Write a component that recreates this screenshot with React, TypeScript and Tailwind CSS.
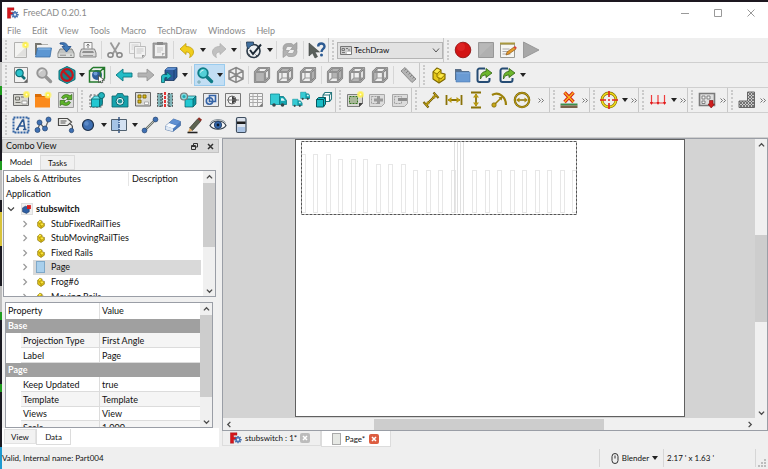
import { useState } from "react";
import type { ReactNode } from "react";
import clsx from "clsx";

interface IconProps {
  children: ReactNode;
  size?: string;
}

function Icon({ children, size = "size-[18px]" }: IconProps) {
  return (
    <svg viewBox="0 0 18 18" fill="none" className={clsx("shrink-0", size)} aria-hidden="true">
      {children}
    </svg>
  );
}

/* ---------- shared drawing parts ---------- */

function Spark({ x = 14, y = 4 }: { x?: number; y?: number }) {
  return (
    <g>
      <circle cx={x} cy={y} r="3.6" fill="#fdf46a" opacity="0.7" />
      <circle cx={x} cy={y} r="2.4" fill="#fff04a" />
      <circle cx={x} cy={y} r="1" fill="#fffde0" />
    </g>
  );
}

function GreyCube({ face }: { face: "front" | "top" | "right" | "rear" | "bottom" | "left" }) {
  const fill = "#b4b4b4";
  return (
    <Icon>
      {face === "rear" && <path d="M6 2h10v10H6z" fill={fill} />}
      {face === "bottom" && <path d="M2 16l4-4h10l-4 4z" fill={fill} />}
      {face === "left" && <path d="M2 6l4-4v10l-4 4z" fill={fill} />}
      <path d="M6 2v10h10M2 16l4-4" stroke="#9c9c9c" strokeWidth="1.200" />
      {face === "front" && <path d="M2 6h10v10H2z" fill={fill} />}
      {face === "top" && <path d="M2 6l4-4h10l-4 4z" fill={fill} />}
      {face === "right" && <path d="M12 6l4-4v10l-4 4z" fill={fill} />}
      <path d="M2 6h10v10H2zM2 6l4-4h10l-4 4M16 2v10l-4 4" stroke="#7f7f7f" strokeWidth="2.200" strokeLinejoin="round" />
      <path d="M2 6h10v10H2zM2 6l4-4h10l-4 4M16 2v10l-4 4" stroke="#a8a8a8" strokeWidth="0.900" strokeLinejoin="round" />
    </Icon>
  );
}

function Folder({ body, tab }: { body: string; tab: string }) {
  return (
    <Icon>
      <path d="M2 3h6l1 2h7v9H2z" fill={tab} />
      <path d="M3 6h14v10H3z" fill={body} stroke="#4a78ae" strokeWidth="0.600" />
      <path d="M3 7h14" stroke="#9cc0e6" strokeWidth="0.8" opacity="0.6" />
    </Icon>
  );
}

function PartIcon({ size }: { size?: string }) {
  return (
    <Icon size={size}>
      <path d="M3 6l4-4 4 2v3l4 1v5l-6 4-6-4z" fill="#e6c818" stroke="#7a6500" strokeWidth="1.1" strokeLinejoin="round" />
      <path d="M3 6l4 2 4-4M7 8v3l4 2 4-4.5M9 17v-5" stroke="#8a7300" strokeWidth="0.9" />
      <path d="M4 5.6l3-2.8 3 1.3-3 2.8zM8 10.600l3-2.600 3 1-3 2.700z" fill="#fbe94c" />
    </Icon>
  );
}

function FreeCadLogo({ size }: { size?: string }) {
  return (
    <Icon size={size}>
      <path d="M0.500 1h10v3.800H5.500v3h4.500v3.400H5.500V17h-5z" fill="#d4161c" stroke="#8e0b10" strokeWidth="0.5" />
      <g stroke="#3b66a5" strokeWidth="2.200">
        <path d="M12 6v11M6.500 11.500h11M8.100 7.600l7.800 7.800M15.900 7.600l-7.800 7.800" />
      </g>
      <circle cx="12" cy="11.500" r="3.600" fill="#4c78b8" />
      <circle cx="12" cy="11.500" r="1.600" fill="#eef2f8" />
    </Icon>
  );
}

function TealCube({ x = 0, y = 0 }: { x?: number; y?: number }) {
  return (
    <g transform={`translate(${x} ${y})`}>
      <path d="M1 4l3-3h8l-2 3v7l-1 1H1z" fill="#0f9ba5" />
      <path d="M1 4h8v8H1z" fill="#22c8d2" />
      <path d="M1 4l3-3h8L9 4z" fill="#6ee8ee" />
      <path d="M9 4l3-3v8l-3 3z" fill="#0d97a2" />
      <path d="M1 4h8v8H1zM1 4l3-3h8L9 4M12 1v8l-3 3" stroke="#07585f" strokeWidth="0.7" />
    </g>
  );
}

function Car({ x, y, s }: { x: number; y: number; s: number }) {
  return (
    <g transform={`translate(${x} ${y}) scale(${s})`}>
      <path d="M1 2h9v10.500H1z" fill="#35cbd4" stroke="#0b8a94" strokeWidth="0.8" />
      <path d="M10 4.500h4l3 4v4h-7z" fill="#14a5b0" stroke="#0b7780" strokeWidth="0.8" />
      <path d="M11.500 6.200h2l2 2.600h-4z" fill="#d6f7f9" />
      <circle cx="4.500" cy="13" r="1.800" fill="#37474c" />
      <circle cx="13" cy="13" r="1.800" fill="#37474c" />
    </g>
  );
}

function Magnifier({ glass, handle }: { glass: string; handle: string }) {
  return (
    <g>
      <path d="M10.500 10.500l5 5" stroke={handle} strokeWidth="3.400" strokeLinecap="round" />
      <circle cx="7" cy="7" r="4.800" fill={glass} stroke={handle} strokeWidth="1.800" />
      <path d="M4.500 6.500a3 3 0 0 1 3-2.400" stroke="#fff" strokeWidth="1" opacity="0.8" />
    </g>
  );
}

/* ---------- toolbar pieces ---------- */

function Tool({ label, children }: { label: string; children: ReactNode }) {
  return (
    <button type="button" aria-label={label} title={label} className="flex h-[22px] min-w-0 flex-1 items-center justify-center">
      {children}
    </button>
  );
}

function Group({ className, children }: { className: string; children: ReactNode }) {
  return <div className={clsx("flex shrink-0 items-center", className)}>{children}</div>;
}

function Drop({ label = "More", className = "w-[9px]" }: { label?: string; className?: string }) {
  return (
    <button type="button" aria-label={label} className={clsx("flex h-[22px] shrink-0 items-center justify-center", className)}>
      <svg viewBox="0 0 6 4" className="h-[4px] w-[6px]" aria-hidden="true">
        <path d="M0 0h6L3 4z" fill="#222" />
      </svg>
    </button>
  );
}

function Sep() {
  return (
    <span className="flex w-[5px] shrink-0 justify-center">
      <span className="h-[18px] w-px bg-[#d6d6d6]" />
    </span>
  );
}

function Grip() {
  return <span className="mx-[3px] h-[20px] w-0 shrink-0 border-l-2 border-dotted border-[#cacaca]" />;
}

function More({ className = "w-[9px]" }: { className?: string }) {
  return (
    <button type="button" aria-label="Show more tools" className={clsx("flex h-[22px] shrink-0 items-center justify-center", className)}>
      <svg viewBox="0 0 6 5" fill="none" className="h-[5px] w-[6px]" aria-hidden="true">
        <path d="M0.500 0.500l2 2-2 2M3.500 0.500l2 2-2 2" stroke="#555" strokeWidth="0.800" />
      </svg>
    </button>
  );
}

function Toolbar({ label, edge = true, children }: { label: string; edge?: boolean; children: ReactNode }) {
  return (
    <div role="toolbar" aria-label={label} className={clsx("flex h-full shrink-0 items-center", edge && "border-r border-[#c8c8c8]")}>
      <Grip />
      {children}
    </div>
  );
}

function ToolbarRow({ children }: { children: ReactNode }) {
  return <div className="flex h-[25px] shrink-0 overflow-hidden border-b border-[#cfcfcf] bg-[#efefef]">{children}</div>;
}

/* ---------- toolbars ---------- */

function FileRow() {
  const [workbench, setWorkbench] = useState("TechDraw");
  return (
    <ToolbarRow>
      <Toolbar label="File">
        <Group className="w-[89px]">
          <Tool label="New">
            <Icon>
              <path d="M2.500 1.500h12v15h-12z" fill="#f4f4f2" stroke="#b2b2b0" />
              <path d="M4 15.500h10V6z" fill="#e0e0de" />
              <Spark x={13.500} y={4} />
            </Icon>
          </Tool>
          <Tool label="Open">
            <Icon>
              <path d="M1 2h6l1 1.500h6V14H1z" fill="#77766f" />
              <path d="M3 4h11v6H3z" fill="#f2f2f2" />
              <path d="M3.500 7h14l-1.500 9H1.500z" fill="#5b96d2" stroke="#3a6ea6" strokeWidth="0.8" />
              <path d="M4 8h12.500" stroke="#93bfe8" />
            </Icon>
          </Tool>
          <Tool label="Save">
            <Icon>
              <path d="M3 8h12l2 4v4.500H1V12z" fill="#c2c4c2" stroke="#767876" strokeWidth="0.9" />
              <path d="M1.500 12.500h15v3.500h-15z" fill="#dcdedc" />
              <path d="M3 14.200h6M13 14.200h2" stroke="#888" />
              <path d="M3 2c4-1 7 0 8 3.500h3L9.500 11 5 5.500h2.500C7 4 5 3 3 3z" fill="#3f79b8" stroke="#204a87" strokeWidth="0.8" />
            </Icon>
          </Tool>
          <Tool label="Print">
            <Icon>
              <path d="M5 1.500h8V9H5z" fill="#f8f8f8" stroke="#8b8b8b" />
              <path d="M9 3v4M7.500 4.500L9 3l1.500 1.500" stroke="#777" />
              <path d="M2.500 8h13l1.500 4v4H1v-4z" fill="#dadada" stroke="#858585" />
              <path d="M4 10h10l1 2H3z" fill="#8f8f8f" />
              <path d="M4 14.500h10" stroke="#999" />
            </Icon>
          </Tool>
        </Group>
        <Sep />
        <Group className="w-[67px]">
          <Tool label="Cut">
            <Icon>
              <path d="M4.500 1.500l6.500 11M13.500 1.500L7 12.500" stroke="#999" strokeWidth="1.800" />
              <ellipse cx="4.500" cy="14" rx="2.600" ry="2.300" stroke="#858585" strokeWidth="1.500" />
              <ellipse cx="13.500" cy="14" rx="2.600" ry="2.300" stroke="#858585" strokeWidth="1.500" />
            </Icon>
          </Tool>
          <Tool label="Copy">
            <Icon>
              <path d="M1.500 1.500h11v11h-11z" fill="#f0f0f0" stroke="#c6c6c6" />
              <path d="M3.500 4h7M3.500 6h2M3.500 8h2" stroke="#d0d0d0" />
              <path d="M6.500 5.500h11v9l-2.500 2.500H6.500z" fill="#f2f2f2" stroke="#bcbcbc" />
              <path d="M8.500 8h7M8.500 10h7M8.500 12h5" stroke="#c8c8c8" />
              <path d="M17 14l-3 3v-3z" fill="#999" />
            </Icon>
          </Tool>
          <Tool label="Paste">
            <Icon>
              <path d="M2 2h14v15H2z" fill="#a4a4a4" stroke="#878787" strokeWidth="0.8" />
              <path d="M4 4h10v11H4z" fill="#f0f0f0" />
              <path d="M6 1h6v3H6z" fill="#888" />
              <path d="M6 7h6M6 9h6M6 11h4" stroke="#c4c4c4" />
              <path d="M14 12l-3 3v-3z" fill="#b0b0b0" />
            </Icon>
          </Tool>
        </Group>
        <Sep />
        <Group className="w-[22px]">
          <Tool label="Undo">
            <Icon>
              <path d="M2 8l6-5.500v3c5 0 7.500 2.500 7.500 5.500 0 2.500-1.500 4.500-4 5.500 1.500-3 0-5.500-3.500-5.500v2.500z" fill="#f0cd1c" stroke="#bf9c08" strokeWidth="0.8" />
            </Icon>
          </Tool>
        </Group>
        <Drop label="Undo history" className="w-[10px]" />
        <Group className="w-[22px]">
          <Tool label="Redo">
            <Icon>
              <path d="M16 8l-6-5.500v3C5 5.500 2.500 8 2.500 11c0 2.500 1.500 4.500 4 5.500C5 13.500 6.500 11 10 11v2.500z" fill="#c0c0c0" stroke="#b0b0b0" strokeWidth="0.8" />
            </Icon>
          </Tool>
        </Group>
        <Drop label="Redo history" className="w-[8px]" />
        <Sep />
        <Group className="w-[22px]">
          <Tool label="Validate">
            <Icon>
              <circle cx="8.500" cy="10" r="6.500" fill="#eceff2" stroke="#2c3a48" strokeWidth="1.600" />
              <path d="M1.500 1h7v3c-2 0-4 1.500-5 4-1.500-1-2-3-2-7z" fill="#3f6f9f" stroke="#24394e" strokeWidth="0.800" />
              <path d="M5 9l3 4 8-9.500" stroke="#1d2a36" strokeWidth="2" />
              <path d="M3 13l2 1M12 15l-1.500-1.500" stroke="#555" />
            </Icon>
          </Tool>
        </Group>
        <Drop />
        <Sep />
        <Group className="w-[22px]">
          <Tool label="Refresh">
            <Icon>
              <path d="M2 8.500V7a5 5 0 0 1 5-4.500h3.500L12.500 4 16 1.500v7H9.500l2-2L10 5.500H7.500C5.500 5.500 5 7 5 8.500z" fill="#aaa" stroke="#929292" strokeWidth="0.6" />
              <path d="M16 9.500V11a5 5 0 0 1-5 4.500H7.500L5.500 14 2 16.500v-7h6.500l-2 2L8 12.500h2.500c2 0 2.500-1.500 2.500-3z" fill="#b2b2b2" stroke="#929292" strokeWidth="0.6" />
            </Icon>
          </Tool>
        </Group>
        <Sep />
        <Group className="w-[22px]">
          <Tool label="What's This?">
            <Icon>
              <path d="M1 2v13l3.500-3 2.500 5 2.500-1.300L7 11h4.500z" fill="#5a605c" stroke="#3d423f" strokeWidth="0.6" />
              <path d="M10.200 5.500c0-4 6.300-4 6.300 0 0 2.500-3 2.500-3 5.500" stroke="#2c5a92" strokeWidth="2.400" />
              <circle cx="13.500" cy="14" r="1.500" fill="#2c5a92" />
            </Icon>
          </Tool>
        </Group>
      </Toolbar>
      <Toolbar label="Workbench">
        <div className="relative w-[106px]">
          <label htmlFor="workbench" className="sr-only">Workbench</label>
          <select
            id="workbench"
            value={workbench}
            onChange={(e) => setWorkbench(e.target.value)}
            className="block h-[17px] w-full appearance-none border border-[#b4b4b4] bg-[#e2e2e2] pl-[16px] text-[8px] leading-[15px] text-[#111]"
          >
            <option>TechDraw</option>
            <option>Part Design</option>
            <option>Sketcher</option>
          </select>
          <svg viewBox="0 0 12 9" fill="none" className="pointer-events-none absolute top-[4px] left-[3px] h-[9px] w-[12px]" aria-hidden="true">
            <path d="M0.500 0.500h11v8H0.500z" fill="#ccc" stroke="#777" />
            <path d="M2 2.500h2.500v2H2zM6 2.500h2M2 6.500h3M9 3v2" stroke="#777" />
            <path d="M7 6h4v2H7z" fill="#fff" />
          </svg>
          <svg viewBox="0 0 8 5" fill="none" className="pointer-events-none absolute top-[6px] right-[3px] h-[5px] w-[8px]" aria-hidden="true">
            <path d="M1 0.500l3 3.500 3-3.500" stroke="#555" />
          </svg>
        </div>
      </Toolbar>
      <Toolbar label="Macro" edge={false}>
        <Group className="w-[90px]">
          <Tool label="Record macro">
            <Icon>
              <circle cx="9" cy="9" r="7.800" fill="#d21414" stroke="#8a0a0a" strokeWidth="0.8" />
              <circle cx="7" cy="6" r="4" fill="#ee3a3a" opacity="0.4" />
            </Icon>
          </Tool>
          <Tool label="Stop macro">
            <Icon>
              <path d="M1.500 1.500h15v15h-15z" fill="#b0b0b0" stroke="#979797" />
              <path d="M2.500 2.500h13L2.500 15z" fill="#b8b8b8" />
            </Icon>
          </Tool>
          <Tool label="Macros">
            <Icon>
              <path d="M1.500 3h14v13.500h-14z" fill="#f6f6f2" stroke="#9a9a94" />
              <path d="M1 1.500h15v2H1z" fill="#a8983e" />
              <path d="M3.500 8h7M3.500 10.500h6M3.500 13h8" stroke="#aaa" />
              <path d="M7 14l1-3 7-5 2 2-7 5z" fill="#e2992c" stroke="#825014" strokeWidth="0.6" />
              <path d="M14.500 6.200L16 5l2 2-1.500 1z" fill="#d8433a" />
            </Icon>
          </Tool>
          <Tool label="Execute macro">
            <Icon>
              <path d="M1.500 1l15.500 8-15.500 8z" fill="#a8a8a8" stroke="#8e8e8e" strokeWidth="0.8" />
            </Icon>
          </Tool>
        </Group>
      </Toolbar>
    </ToolbarRow>
  );
}

function LinkIcon() {
  return (
    <Icon>
      <path d="M10 2.500H4.500a2 2 0 0 0-2 2v9.500a2 2 0 0 0 2 2h8a2 2 0 0 0 2-2v-2" stroke="#264c74" strokeWidth="2" />
      <path d="M5.500 13c-.5-5 2-7.500 5.500-7.500V2.500l6 4.500-6 4.500V9c-2.500 0-4.500 1-5.500 4z" fill="#6cb52c" stroke="#2e6010" strokeWidth="0.8" />
    </Icon>
  );
}

function ViewRow() {
  return (
    <ToolbarRow>
      <Toolbar label="View">
        <Group className="w-[68px]">
          <Tool label="Fit all">
            <Icon>
              <path d="M2.500 1.500h13v15h-13z" fill="#f2f2f2" stroke="#888" />
              <path d="M15 13l-3.500 3.500H15z" fill="#666" />
              <path d="M9 9l4 4" stroke="#0e6d75" strokeWidth="2.600" />
              <circle cx="7.500" cy="7" r="3.700" fill="#2bc3cc" stroke="#0e6d75" strokeWidth="1.200" />
            </Icon>
          </Tool>
          <Tool label="Fit selection">
            <Icon>
              <Magnifier glass="#c8c8c8" handle="#969696" />
            </Icon>
          </Tool>
          <Tool label="Draw style">
            <Icon>
              <path d="M9 0.500l8 4v9l-8 4-8-4v-9z" fill="#17aab4" stroke="#0b6b73" />
              <circle cx="9" cy="9" r="5.800" fill="#1a7f86" stroke="#c4161c" strokeWidth="2.200" />
              <path d="M5 5l8 8" stroke="#c4161c" strokeWidth="2.200" />
            </Icon>
          </Tool>
        </Group>
        <Drop className="w-[8px]" />
        <Group className="w-[22px]">
          <Tool label="Bounding box">
            <Icon>
              <circle cx="9" cy="9" r="5" fill="#2f5e9e" />
              <circle cx="7.500" cy="7.500" r="2" fill="#6e9bd6" />
              <path d="M1.500 5h11v11h-11zM5 1.500h11.500v11M1.500 5L5 1.500M12.500 5l4-3.500M12.500 16l4-3.500" stroke="#247a2c" strokeWidth="1.500" />
              <path d="M10.500 9.500v7l2-1.500 1 2 1.500-.8-1-2h2.500z" fill="#fff" stroke="#333" strokeWidth="0.7" />
            </Icon>
          </Tool>
        </Group>
        <Sep />
        <Group className="w-[67px]">
          <Tool label="Back">
            <Icon>
              <path d="M1 9l7-6v4h9v4H8v4z" fill="#25bcc6" stroke="#0b7780" strokeWidth="0.9" strokeLinejoin="round" />
            </Icon>
          </Tool>
          <Tool label="Forward">
            <Icon>
              <path d="M17 9l-7-6v4H1v4h9v4z" fill="#b3b3b3" stroke="#969696" strokeWidth="0.9" strokeLinejoin="round" />
            </Icon>
          </Tool>
          <Tool label="Go to linked object">
            <Icon>
              <path d="M5 4l3-2.500h9V11l-3 3.500H5z" fill="#2d5c9c" stroke="#16335c" strokeWidth="0.8" />
              <path d="M5 4l3-2.500h9L14 4z" fill="#5e8fd0" />
              <path d="M14 4v10.500" stroke="#16335c" strokeWidth="0.7" />
              <path d="M1.500 16.500V11c0-1.500 1-2.500 2.500-2.500h3V6l4.500 4L7 14v-2.500H5.500c-1 0-1 .5-1 1v4z" fill="#25bcc6" stroke="#0b5f66" strokeWidth="0.8" />
            </Icon>
          </Tool>
        </Group>
        <Drop />
        <Sep />
        <div className="flex h-[22px] shrink-0 items-center border border-[#99cbee] bg-[#c2def4]">
          <Group className="w-[20px]">
            <Tool label="Zoom">
              <Icon>
                <Magnifier glass="#54d0d7" handle="#0f7d86" />
                <path d="M1 16h4M3 14v4" stroke="#78a9b0" />
              </Icon>
            </Tool>
          </Group>
          <Drop />
        </div>
        <Group className="w-[21px]">
          <Tool label="Isometric">
            <Icon>
              <path d="M9 1.500l7 3.500v8l-7 3.500L2 13V5zM9 1.500V9M2 5l7 4 7-4M9 9v7.500M2 13l7-4 7 4" stroke="#888" strokeWidth="1.500" />
            </Icon>
          </Tool>
        </Group>
        <Sep />
        <Group className="w-[68px]">
          <Tool label="Front"><GreyCube face="front" /></Tool>
          <Tool label="Top"><GreyCube face="top" /></Tool>
          <Tool label="Right"><GreyCube face="right" /></Tool>
        </Group>
        <Sep />
        <Group className="w-[67px]">
          <Tool label="Rear"><GreyCube face="rear" /></Tool>
          <Tool label="Bottom"><GreyCube face="bottom" /></Tool>
          <Tool label="Left"><GreyCube face="left" /></Tool>
        </Group>
        <Sep />
        <Group className="w-[23px]">
          <Tool label="Measure">
            <Icon>
              <path d="M2 5l4-3.500 11 11.500-4 3.500z" fill="#b4b4b4" stroke="#8c8c8c" />
              <path d="M7 3l-1.500 1.500M9 5L7 7M11 7L9.500 8.500M13 9l-2 2M15 11l-1.500 1.500" stroke="#777" strokeWidth="0.8" />
            </Icon>
          </Tool>
        </Group>
      </Toolbar>
      <Toolbar label="Structure" edge={false}>
        <Group className="w-[90px]">
          <Tool label="Create part"><PartIcon /></Tool>
          <Tool label="Create group"><Folder body="#6a9bd4" tab="#5a6f88" /></Tool>
          <Tool label="Make link"><LinkIcon /></Tool>
          <Tool label="Make sub-link"><LinkIcon /></Tool>
        </Group>
        <Drop />
      </Toolbar>
    </ToolbarRow>
  );
}

function PagesRow() {
  return (
    <ToolbarRow>
      <Toolbar label="TechDraw pages">
        <Group className="w-[67px]">
          <Tool label="Insert default page">
            <Icon>
              <path d="M1.500 3.500h15v11h-15z" fill="#d6d6d0" stroke="#6b6b6b" />
              <path d="M3.500 6h4v3h-4zM9 6h3M3.500 11.500h5" stroke="#70706a" />
              <path d="M10 10h5v3h-5z" fill="#fff" stroke="#777" strokeWidth="0.6" />
              <Spark x={14.500} y={3.500} />
            </Icon>
          </Tool>
          <Tool label="Insert page from template">
            <Icon>
              <path d="M1 3h6l1 2h8v9H1z" fill="#d96c06" />
              <path d="M1 6h15v10.500H1z" fill="#fb8a1c" />
              <Spark x={14} y={4} />
            </Icon>
          </Tool>
          <Tool label="Redraw page">
            <Icon>
              <path d="M1.500 1.500h15v15h-15z" fill="#dcdcdc" stroke="#9c9c9c" />
              <path d="M4.500 6.500C6 3.500 10 2.500 13 5l1.800-1.500V8.500H9.500l1.700-1.700C9.500 5.800 7.500 6 6.500 8z" fill="#5fb52a" stroke="#2c6a10" strokeWidth="0.700" />
              <path d="M13.500 11.500c-1.500 3-5.500 4-8.500 1.500l-1.800 1.500V9.500h5.300l-1.700 1.700c1.700 1 3.700.8 4.700-1.200z" fill="#5fb52a" stroke="#2c6a10" strokeWidth="0.700" />
            </Icon>
          </Tool>
        </Group>
      </Toolbar>
      <Toolbar label="TechDraw views">
        <Group className="w-[249px]">
          <Tool label="Insert view">
            <Icon>
              <path d="M2 4h12v12H2z" stroke="#5b5b5b" strokeDasharray="2 1.500" />
              <TealCube x={2.500} y={4} />
              <circle cx="13.500" cy="4.500" r="3" fill="#22b5bf" stroke="#0a656c" />
            </Icon>
          </Tool>
          <Tool label="Insert active view">
            <Icon>
              <path d="M1 5h4l1.500-2.500h5L13 5h4v11H1z" fill="#16a3ad" stroke="#0b636a" strokeWidth="0.8" />
              <circle cx="9" cy="10.300" r="4" fill="#e4f6f7" stroke="#0b636a" />
              <circle cx="9" cy="10.300" r="2.300" fill="#1a8f98" />
            </Icon>
          </Tool>
          <Tool label="Insert projection group">
            <Icon>
              <path d="M1.500 1.500h15v13.500h-15z" fill="#dadad6" stroke="#666" />
              <path d="M4 4h3v3H4zM9 4h3v3H9zM4 9h3v3H4z" fill="#e2be1a" stroke="#7d6806" strokeWidth="0.9" />
              <path d="M10.500 11h4v2.500h-4z" fill="#fff" stroke="#888" strokeWidth="0.6" />
            </Icon>
          </Tool>
          <Tool label="Insert section view">
            <Icon>
              <path d="M1.500 2.500h5v13h-5zM12 2.500h4.500v13H12z" fill="#7fb4b8" stroke="#555" strokeDasharray="2 1.200" />
              <path d="M9 1v16" stroke="#e02020" strokeWidth="1.800" strokeDasharray="3 1" />
              <path d="M5 2v14M13 2v14" stroke="#444" strokeDasharray="2 1" />
            </Icon>
          </Tool>
          <Tool label="Insert detail view">
            <Icon>
              <TealCube x={5} y={4} />
              <circle cx="5" cy="5.500" r="3.500" fill="#7fd9de" stroke="#777" strokeWidth="1.200" />
              <circle cx="5" cy="5.500" r="1.500" fill="#1aa8b2" />
            </Icon>
          </Tool>
          <Tool label="Insert draft object">
            <Icon>
              <path d="M1.500 2.500h15v13h-15z" fill="#e8ebf0" stroke="#777" />
              <circle cx="7.500" cy="10" r="3.200" stroke="#3463a6" strokeWidth="1.600" />
              <path d="M7.500 4.500h6v6h-6z" stroke="#3463a6" strokeWidth="1.600" />
            </Icon>
          </Tool>
          <Tool label="Insert arch object">
            <Icon>
              <path d="M1.500 2.500h15v13h-15z" fill="#ededed" stroke="#777" />
              <circle cx="8" cy="9" r="4" fill="#fafafa" stroke="#666" />
              <path d="M8 5l5 4-5 4z" fill="#3d3d3d" />
              <path d="M3 9h12" stroke="#777" />
            </Icon>
          </Tool>
          <Tool label="Insert spreadsheet">
            <Icon>
              <path d="M2.500 2.500h13v13h-13z" fill="#f4f4f4" stroke="#999" />
              <path d="M2.500 5.500h13M2.500 8.500h13M2.500 11.500h13M6 2.500v13M10.500 2.500v13" stroke="#aaa" />
              <path d="M15.500 12l-3.500 3.500h3.500z" fill="#777" />
            </Icon>
          </Tool>
          <Tool label="Move view"><Icon><Car x={0.500} y={1} s={1} /></Icon></Tool>
          <Tool label="Share view">
            <Icon>
              <Car x={0} y={7} s={0.600} />
              <Car x={8} y={0} s={0.600} />
            </Icon>
          </Tool>
          <Tool label="Project shape">
            <Icon>
              <path d="M8 4l2-2.500h6.500V8l-2 2.500H8zM8 4h6.500v6.500M14.500 4l2-2.500" fill="#fff" stroke="#28787e" strokeWidth="1.100" />
              <path d="M1.500 8.500l2-2h7v6.500l-2 3h-7z" fill="#18bcc6" stroke="#07585f" />
              <path d="M1.500 8.500h7v7M8.500 8.500l2-2" stroke="#07585f" />
            </Icon>
          </Tool>
        </Group>
      </Toolbar>
      <Toolbar label="TechDraw clips">
        <Group className="w-[67px]">
          <Tool label="Insert clip group">
            <Icon>
              <path d="M1.500 3.500h15v9l-3 3h-12z" fill="#d8d8d4" stroke="#7e7e7e" />
              <path d="M3.500 5.500h8v7h-8z" fill="#a9b79a" stroke="#35751f" strokeDasharray="2 1" />
              <path d="M17 12l-4 4v-4z" fill="#444" />
              <Spark x={14.500} y={3.500} />
            </Icon>
          </Tool>
          <Tool label="Add view to clip">
            <Icon>
              <path d="M1.500 3.500h15v9l-3 3h-12z" fill="#dcdcdc" stroke="#a8a8a8" />
              <path d="M3.500 5.500h7v7h-7z" stroke="#a0a0a0" strokeDasharray="2 1" />
              <path d="M6 9h9M10.500 5v8" stroke="#9a9a9a" strokeWidth="3" />
            </Icon>
          </Tool>
          <Tool label="Remove view from clip">
            <Icon>
              <path d="M1.500 3.500h15v9l-3 3h-12z" fill="#dcdcdc" stroke="#a8a8a8" />
              <path d="M3.500 5.500h7v7h-7z" stroke="#a0a0a0" strokeDasharray="2 1" />
              <path d="M7 8.500h9" stroke="#8e8e8e" strokeWidth="3" />
            </Icon>
          </Tool>
        </Group>
      </Toolbar>
      <Toolbar label="TechDraw dimensions">
        <Group className="w-[113px]">
          <Tool label="Length dimension">
            <Icon>
              <path d="M4 14L14 4M1.500 11l5 5.500M11.500 1.500l5 5.500" stroke="#6f5b05" strokeWidth="2.200" />
              <path d="M4 14L14 4M2 11.500l4 4.500M12 2l4 4.500" stroke="#c4a416" strokeWidth="1" />
              <path d="M4 14l1-4 3 3zM14 4l-4 1 3 3z" fill="#b29410" />
            </Icon>
          </Tool>
          <Tool label="Horizontal dimension">
            <Icon>
              <path d="M1.500 4v10M16.500 4v10M3 9h12" stroke="#8a7208" strokeWidth="1.800" />
              <path d="M2.500 9l4-3v6zM15.500 9l-4-3v6z" fill="#b8990f" />
            </Icon>
          </Tool>
          <Tool label="Vertical dimension">
            <Icon>
              <path d="M4 1.500h10M4 16.500h10M9 3v12" stroke="#8a7208" strokeWidth="1.800" />
              <path d="M9 2.500l-3 4h6zM9 15.500l-3-4h6z" fill="#b8990f" />
            </Icon>
          </Tool>
          <Tool label="Radius dimension">
            <Icon>
              <path d="M2 4c7-4 14 2 14 10" stroke="#9c820c" strokeWidth="2.200" />
              <path d="M4 14l7-7" stroke="#9c820c" strokeWidth="1.600" />
              <path d="M13 5l-4.500 1.500 3 3z" fill="#9c820c" />
              <circle cx="4" cy="14" r="2.200" fill="#c7a818" stroke="#776208" strokeWidth="0.700" />
            </Icon>
          </Tool>
          <Tool label="Diameter dimension">
            <Icon>
              <circle cx="9" cy="9" r="7.200" stroke="#766105" strokeWidth="2.200" />
              <circle cx="9" cy="9" r="7.200" stroke="#c4a51a" />
              <path d="M4 9h10" stroke="#8a7208" strokeWidth="1.500" />
              <path d="M3 9l3.500-2.500v5zM15 9l-3.500-2.500v5z" fill="#a98c0d" />
            </Icon>
          </Tool>
        </Group>
        <More className="w-[16px]" />
      </Toolbar>
      <Toolbar label="TechDraw file access">
        <Group className="w-[22px]">
          <Tool label="Remove face hatch">
            <Icon>
              <path d="M0.500 12.500h17v2h-17z" fill="#3c8f4c" />
              <path d="M0.500 14.500h17v2.500h-17z" fill="#7a6248" />
              <path d="M4.500 1.500l9 9.500M13.500 1.500l-9 9.500" stroke="#d91e12" strokeWidth="3.400" />
              <path d="M4.500 1.500l9 9.500M13.500 1.500l-9 9.500" stroke="#f9b21c" strokeWidth="1.400" />
            </Icon>
          </Tool>
        </Group>
        <More />
      </Toolbar>
      <Toolbar label="TechDraw centerlines">
        <Group className="w-[22px]">
          <Tool label="Add centerline">
            <Icon>
              <circle cx="9" cy="9" r="7" stroke="#81720a" strokeWidth="2.800" />
              <circle cx="9" cy="9" r="7" stroke="#f0d818" strokeWidth="1.600" />
              <path d="M9 0v6M9 12v6M0 9h6M12 9h6M8 9h2" stroke="#e32020" strokeWidth="1.600" />
            </Icon>
          </Tool>
        </Group>
        <Drop />
        <More />
      </Toolbar>
      <Toolbar label="TechDraw extensions">
        <Group className="w-[22px]">
          <Tool label="Chain dimension">
            <Icon>
              <path d="M2.500 4v9M9 4v9M15.500 4v9M1 12h16" stroke="#ee3c3c" strokeWidth="1.200" />
              <path d="M1 11h3l-1.500 3zM7.500 11h3L9 14zM14 11h3l-1.500 3z" fill="#e01a1a" />
            </Icon>
          </Tool>
        </Group>
        <Drop />
        <More />
      </Toolbar>
      <Toolbar label="TechDraw tools">
        <Group className="w-[22px]">
          <Tool label="Export page">
            <Icon>
              <path d="M1.500 2.500h15v12h-15z" fill="#dfdfdf" stroke="#7a7a7a" strokeWidth="1.600" />
              <path d="M4 5h3v3H4zM9 5h3v3H9zM4 10h3v2.500H4z" fill="#f5f5f5" stroke="#777" strokeWidth="0.9" />
              <path d="M11.500 9.500h3.500v3.500h1.500l-3.300 4-3.200-4h1.500z" fill="#cf1d1d" stroke="#7a0a0a" strokeWidth="0.600" />
            </Icon>
          </Tool>
        </Group>
        <More />
      </Toolbar>
      <Toolbar label="TechDraw decoration" edge={false}>
        <Group className="w-[22px]">
          <Tool label="Hatch face">
            <Icon>
              <defs>
                <pattern id="hatch" width="3" height="3" patternUnits="userSpaceOnUse">
                  <path d="M0 0l3 3M3 0L0 3" stroke="#5e5e5e" strokeWidth="0.800" />
                </pattern>
              </defs>
              <path d="M9.500 1h7v15.500H1V10h8.500z" fill="#cacaca" />
              <path d="M9.500 1h7v15.500H1V10h8.500z" fill="url(#hatch)" stroke="#666" />
            </Icon>
          </Tool>
        </Group>
        <More />
      </Toolbar>
    </ToolbarRow>
  );
}

function AnnotationRow() {
  return (
    <ToolbarRow>
      <Toolbar label="TechDraw annotation" edge={false}>
        <Group className="w-[89px]">
          <Tool label="Insert annotation">
            <Icon>
              <path d="M1.500 1.500h15v15h-15z" stroke="#3465a4" strokeWidth="2" strokeDasharray="2 1" />
              <path d="M5 13.500L10.500 4h1L13 13.500M7.500 10h5M4 13.500h3M11 13.500h3.500" stroke="#2b5791" strokeWidth="1.600" />
            </Icon>
          </Tool>
          <Tool label="Add vertices">
            <Icon>
              <path d="M3.500 14L6 7l5 6 3.500-9" stroke="#666" strokeWidth="1.200" />
              <circle cx="3.500" cy="14" r="2.500" fill="#3f70b3" stroke="#23446f" strokeWidth="0.700" />
              <circle cx="5.500" cy="6.500" r="2.500" fill="#3f70b3" stroke="#23446f" strokeWidth="0.700" />
              <circle cx="11" cy="12.500" r="2.500" fill="#3f70b3" stroke="#23446f" strokeWidth="0.700" />
              <circle cx="14.500" cy="3.500" r="2.500" fill="#3f70b3" stroke="#23446f" strokeWidth="0.700" />
            </Icon>
          </Tool>
          <Tool label="Add leader line">
            <Icon>
              <path d="M1.500 2.500h9l4 3.500-4 3.500h-9z" fill="#eeeeec" stroke="#4a4a48" strokeWidth="1.200" />
              <path d="M3.500 5h6M3.500 7h5" stroke="#555" />
              <path d="M13 8c3 1 3 4 1.500 6" stroke="#444" strokeWidth="1.200" />
              <circle cx="14.500" cy="14.500" r="2.200" fill="#3f70b3" stroke="#23446f" strokeWidth="0.700" />
            </Icon>
          </Tool>
          <Tool label="Cosmetic vertex">
            <Icon>
              <circle cx="9" cy="9" r="5.500" fill="#3e6fb2" stroke="#1d2f48" strokeWidth="1.200" />
              <circle cx="7.500" cy="7.500" r="2.200" fill="#5b8ac8" />
            </Icon>
          </Tool>
        </Group>
        <Drop />
        <Group className="w-[22px]">
          <Tool label="Centerline to face">
            <Icon>
              <path d="M1.500 3.500h15v11h-15z" fill="#d3e1f2" stroke="#50606f" />
              <path d="M2 4h7v10H2z" fill="#a5c3e6" />
              <path d="M9 1v16" stroke="#2a4d80" strokeWidth="1.400" strokeDasharray="4 1 1 1" />
            </Icon>
          </Tool>
        </Group>
        <Drop />
        <Group className="w-[113px]">
          <Tool label="Cosmetic line">
            <Icon>
              <path d="M3 15L15 3" stroke="#6a706a" strokeWidth="2.400" />
              <path d="M3 15L15 3" stroke="#c2c8c2" strokeWidth="0.900" />
              <circle cx="3.500" cy="14.500" r="2.400" fill="#3f70b3" stroke="#23446f" strokeWidth="0.700" />
              <circle cx="14.500" cy="3.500" r="2.400" fill="#3f70b3" stroke="#23446f" strokeWidth="0.700" />
            </Icon>
          </Tool>
          <Tool label="Erase cosmetic object">
            <Icon>
              <path d="M1.500 10L9.500 3l7 2.500v4L9 15.500l-7.500-2z" fill="#4a7cc0" stroke="#30578c" strokeWidth="0.600" />
              <path d="M1.500 10L5 7l7.500 2.500-3.500 3z" fill="#f6f9fc" />
              <path d="M1.500 10L9 12.500v3l-7.500-2z" fill="#dfe8f3" />
              <path d="M5.500 6.500L9.500 3l7 2.500-4 3.500z" fill="#5f90d2" />
            </Icon>
          </Tool>
          <Tool label="Line appearance">
            <Icon>
              <path d="M3.500 12L11.500 3l3 2.500-8 9z" fill="#5c6450" stroke="#252525" strokeWidth="0.600" />
              <path d="M3.500 12L2 16.500 6.500 14.500z" fill="#e6b067" />
              <path d="M11.500 3l1.500-1.700 3 2.500-1.500 1.700z" fill="#8f2c22" />
              <path d="M1.500 16.500h10" stroke="#222" strokeWidth="1.600" />
            </Icon>
          </Tool>
          <Tool label="Show all edges">
            <Icon>
              <path d="M1 9.500C4 3.500 14 3.500 17 9.500c-3 5-13 5-16 0z" fill="#f8f8f8" stroke="#33404e" strokeWidth="1.200" />
              <path d="M1.500 6.500C5 2.500 13 2.500 16.500 6.500" stroke="#8d979f" />
              <circle cx="9" cy="9" r="3.700" fill="#3568ac" stroke="#18345a" strokeWidth="0.800" />
              <circle cx="9" cy="9" r="1.400" fill="#0d1a2c" />
            </Icon>
          </Tool>
          <Tool label="Welding information">
            <Icon>
              <rect x="4.500" y="1.500" width="9.500" height="15" rx="1.500" fill="#dbe2ec" stroke="#3d4c5e" strokeWidth="1.200" />
              <path d="M5 5.500h8.500v2.500H5z" fill="#1c1c1c" />
              <path d="M5.500 11h7.500v5H5.500z" fill="#a9c3e4" />
            </Icon>
          </Tool>
        </Group>
      </Toolbar>
    </ToolbarRow>
  );
}

/* ---------- scroll bars ---------- */

function Arrow({ dir }: { dir: "up" | "down" | "left" | "right" }) {
  const d = {
    up: "M1 5l3-3 3 3",
    down: "M1 3l3 3 3-3",
    left: "M5 1L2 4l3 3",
    right: "M3 1l3 3-3 3",
  }[dir];
  return (
    <button type="button" aria-label={`Scroll ${dir}`} className="flex size-[12px] shrink-0 items-center justify-center">
      <svg viewBox="0 0 8 8" fill="none" className="size-[7px]" aria-hidden="true">
        <path d={d} stroke="#4a4a4a" strokeWidth="1.500" />
      </svg>
    </button>
  );
}

function VerticalScroll({ children }: { children: ReactNode }) {
  return (
    <div className="flex w-[12px] shrink-0 flex-col bg-[#f0f0f0]">
      <Arrow dir="up" />
      <div className="flex min-h-0 flex-1 flex-col">{children}</div>
      <Arrow dir="down" />
    </div>
  );
}

/* ---------- combo view ---------- */

const TREE_ITEMS = ["StubFixedRailTies", "StubMovingRailTies", "Fixed Rails", "Page", "Frog#6", "Moving Rails"];

function Chevron({ open = false }: { open?: boolean }) {
  return (
    <svg viewBox="0 0 8 8" fill="none" className="size-[8px] shrink-0" aria-hidden="true">
      <path d={open ? "M1 2.500l3 3 3-3" : "M2.500 1l3 3-3 3"} stroke={open ? "#444" : "#999"} strokeWidth="1.200" />
    </svg>
  );
}

function ModelTree() {
  const [selected, setSelected] = useState("Page");
  return (
    <div className="flex h-[127px] shrink-0 overflow-hidden border border-[#9a9ea6] bg-white">
      <div className="min-w-0 flex-1">
        <div className="flex h-[16px] items-center">
          <span className="w-[125px] border-r border-[#e5e5e5] pl-[2px]">Labels &amp; Attributes</span>
          <span className="pl-[3px]">Description</span>
        </div>
        <ul role="tree" aria-label="Model" className="grid h-[117px] auto-rows-fr">
          <li role="treeitem" className="flex items-center pl-[2px]">Application</li>
          <li role="treeitem" aria-expanded="true" className="flex items-center pl-[3px] font-bold">
            <Chevron open />
            <span className="mr-[3px] ml-[6px] flex size-[12px] items-center justify-center border border-[#ddd] bg-[#f0f0f0]">
              <Icon size="size-[10px]">
                <path d="M1 7l5-3 7 2v8l-5 3-7-3z" fill="#2f5fa3" stroke="#17355f" />
                <path d="M9 2h7v7H9z" fill="#d81e1e" />
              </Icon>
            </span>
            stubswitch
          </li>
          {TREE_ITEMS.map((name) => (
            <li key={name} role="treeitem" aria-selected={name === selected} className="flex pr-[2px] pl-[17px]">
              <button type="button" onClick={() => setSelected(name)} className="flex min-w-0 flex-1 items-center text-left">
                <Chevron />
                <span className={clsx("ml-[4px] flex h-full flex-1 items-center gap-[5px] pl-[3px]", name === selected && "bg-[#d9d9d9]")}>
                  {name === "Page" ? (
                    <span className="mr-px h-[12px] w-[9px] border border-[#7fa8c8] bg-[#a8cfec]" />
                  ) : (
                    <PartIcon size="size-[10px]" />
                  )}
                  {name}
                </span>
              </button>
            </li>
          ))}
        </ul>
      </div>
      <VerticalScroll>
        <div className="h-[64px] bg-[#cdcdcd]" />
      </VerticalScroll>
    </div>
  );
}

interface PropertyRow {
  name: string;
  value?: string;
}

const PROPERTIES: PropertyRow[] = [
  { name: "Base" },
  { name: "Projection Type", value: "First Angle" },
  { name: "Label", value: "Page" },
  { name: "Page" },
  { name: "Keep Updated", value: "true" },
  { name: "Template", value: "Template" },
  { name: "Views", value: "View" },
  { name: "Scale", value: "1.000" },
];

function PropertyTable() {
  return (
    <div className="mr-[3px] ml-[2px] flex min-h-0 flex-1 basis-0 overflow-hidden border border-[#9a9ea6] bg-white">
      <div className="min-w-0 flex-1 overflow-hidden">
        <table className="w-full table-fixed border-separate border-spacing-0 text-left">
          <colgroup>
            <col className="w-[15px]" />
            <col className="w-[79px]" />
            <col />
          </colgroup>
          <thead>
            <tr className="h-[16px]">
              <th colSpan={2} scope="col" className="border-r border-[#e0e0e0] p-0 pl-[2px] font-normal">Property</th>
              <th scope="col" className="p-0 pl-[2px] font-normal">Value</th>
            </tr>
          </thead>
          <tbody>
            {PROPERTIES.map((row, i) =>
              row.value === undefined ? (
                <tr key={i} className="h-[14px] bg-[#a0a0a0] text-white">
                  <th colSpan={3} scope="colgroup" className="p-0 pl-[2px] font-bold">{row.name}</th>
                </tr>
              ) : (
                <tr key={i} className="leading-[13px]">
                  <td className="p-0" />
                  <td className={clsx("border-r border-b border-[#dcdcdc] p-0 pl-[2px]", i % 2 === 1 && "bg-[#f5f5f5]", i < 6 && "h-[15px]")}>{row.name}</td>
                  <td className={clsx("border-b border-[#dcdcdc] p-0 pl-[2px]", i % 2 === 1 && "bg-[#f5f5f5]")}>{row.value}</td>
                </tr>
              )
            )}
          </tbody>
        </table>
      </div>
      <VerticalScroll>
        <div className="h-[82px] bg-[#cdcdcd]" />
      </VerticalScroll>
    </div>
  );
}

function ComboView() {
  return (
    <aside className="flex w-[217px] shrink-0 flex-col bg-[#f0f0f0] pt-px">
      <div className="flex h-[14px] shrink-0 items-center border border-[#c4c4c4] bg-[#dadada] pr-[4px] pl-[3px]">
        <h2 className="flex-1">Combo View</h2>
        <button type="button" aria-label="Float" className="mr-[9px]">
          <svg viewBox="0 0 7 7" fill="none" className="size-[7px]" aria-hidden="true">
            <path d="M2.500 2.500v-2h4v3.500h-2M0.500 2.500h4v4h-4zM0.500 3.500h4" stroke="#333" />
          </svg>
        </button>
        <button type="button" aria-label="Close">
          <svg viewBox="0 0 7 7" fill="none" className="size-[7px]" aria-hidden="true">
            <path d="M1 1l5 5M6 1L1 6" stroke="#333" strokeWidth="1.500" />
          </svg>
        </button>
      </div>
      <div role="tablist" className="flex h-[17px] shrink-0 items-end text-[8px]">
        <button type="button" role="tab" aria-selected="true" className="h-[17px] w-[38px] bg-white">Model</button>
        <button type="button" role="tab" aria-selected="false" className="h-[15px] w-[35px] border border-[#dcdcdc] bg-[#f0f0f0]">Tasks</button>
      </div>
      <div className="flex min-h-0 flex-1 flex-col gap-[5px] pr-[3px] pl-px">
        <ModelTree />
        <PropertyTable />
      </div>
      <div role="tablist" className="flex h-[19px] shrink-0 items-start bg-white pt-px pl-[2px] text-[8px]">
        <button type="button" role="tab" aria-selected="false" className="h-[15px] w-[32px] border border-[#e2e2e2] bg-[#f2f2f2]">View</button>
        <button type="button" role="tab" aria-selected="true" className="h-[16px] w-[35px] border border-t-0 border-[#dcdcdc] bg-white">Data</button>
      </div>
    </aside>
  );
}

/* ---------- drawing page ---------- */

const TIES = [
  [0, 13], [12, 13], [25, 13],
  [37, 18], [50, 18], [62, 18],
  [75, 23], [87, 23], [100, 23],
  [112, 29], [125, 29], [137, 29], [150, 29],
  [171, 29], [184, 29], [196, 29], [209, 29], [221, 29], [234, 29], [246, 29], [259, 29], [271, 29],
];

const RAILS = [153, 156, 159, 162];

function SwitchView() {
  return (
    <svg viewBox="0 0 276 74" fill="none" className="ml-[5px] h-[74px] w-[276px]" role="img" aria-label="View of stubswitch">
      {TIES.map(([x, y]) => (
        <rect key={x} x={x + 0.5} y={y + 0.5} width="4" height={71 - y} stroke="#e7e7e7" />
      ))}
      {RAILS.map((x) => (
        <path key={x} d={`M${x + 0.5} 1v71`} stroke="#e0e0e0" />
      ))}
      <rect x="0.5" y="0.5" width="275" height="73" stroke="#555" strokeDasharray="3 1" />
    </svg>
  );
}

function PageArea() {
  return (
    <main className="flex min-w-0 flex-1 flex-col">
      <div className="flex min-h-0 flex-1 flex-col border border-[#9a9ea6]">
        <div className="flex min-h-0 flex-1">
          <div className="flex min-w-0 flex-1 justify-center bg-[#d3d3d3] pb-px pl-[2px]">
            <div className="w-[390px] border border-[#606060] bg-white pt-px">
              <SwitchView />
            </div>
          </div>
          <VerticalScroll>
            <div className="flex-[84]" />
            <div className="flex-[86] bg-[#cdcdcd]" />
            <div className="flex-[84]" />
          </VerticalScroll>
        </div>
        <div className="flex h-[12px] shrink-0 items-center bg-[#f0f0f0] pr-[12px]">
          <Arrow dir="left" />
          <div className="flex h-[11px] min-w-0 flex-1">
            <div className="flex-[139]" />
            <div className="flex-[230] bg-[#cdcdcd]" />
            <div className="flex-[139]" />
          </div>
          <Arrow dir="right" />
        </div>
      </div>
      <div role="tablist" className="flex h-[16px] shrink-0 items-start text-[8px] whitespace-nowrap">
        <div className="flex h-[15px] w-[99px] items-center gap-[3px] border border-t-0 border-[#dcdcdc] pl-[7px]">
          <FreeCadLogo size="size-[12px]" />
          <button type="button" role="tab" aria-selected="false">stubswitch : 1*</button>
          <button type="button" aria-label="Close stubswitch" className="flex size-[10px] items-center justify-center rounded-[2px] bg-[#bcbcbc]">
            <svg viewBox="0 0 6 6" className="size-[6px]" aria-hidden="true"><path d="M1 1l4 4M5 1L1 5" stroke="#fff" strokeWidth="1.500" /></svg>
          </button>
        </div>
        <div className="flex h-[16px] w-[70px] items-center gap-[4px] border border-t-0 border-[#dcdcdc] bg-white pl-[10px]">
          <span className="h-[12px] w-[9px] border border-[#aaa] bg-[#e6e8e4]" />
          <button type="button" role="tab" aria-selected="true">Page*</button>
          <button type="button" aria-label="Close Page" className="flex size-[10px] items-center justify-center rounded-[2px] bg-[#dd5d40]">
            <svg viewBox="0 0 6 6" className="size-[6px]" aria-hidden="true"><path d="M1 1l4 4M5 1L1 5" stroke="#fff" strokeWidth="1.500" /></svg>
          </button>
        </div>
      </div>
    </main>
  );
}

/* ---------- window ---------- */

const MENUS = ["File", "Edit", "View", "Tools", "Macro", "TechDraw", "Windows", "Help"];

function DesktopEdge() {
  return (
    <div className="flex w-[2px] shrink-0 flex-col bg-[#1b1a22]" aria-hidden="true">
      <div className="h-[62px]" />
      <div className="h-[24px] bg-[#c9c9c9]" />
      <div className="h-[9px] bg-[#1f9b1f]" />
      <div className="h-[66px]" />
      <div className="h-[9px] bg-[#1f9b1f]" />
      <div className="h-[30px] bg-[#bdbdbd]" />
      <div className="h-[12px]" />
      <div className="h-[34px] bg-[#d8c33a]" />
      <div className="h-[40px]" />
      <div className="h-[26px] bg-[#bdbdbd]" />
      <div className="h-[8px] bg-[#1f9b1f]" />
      <div className="h-[64px]" />
      <div className="h-[8px] bg-[#1f9b1f]" />
      <div className="h-[55px]" />
      <div className="flex-1 bg-[#1f9ad0]" />
    </div>
  );
}

function App() {
  return (
    <div className="flex h-screen overflow-hidden font-['Lato','Open_Sans',sans-serif] text-[9px] leading-[14px] text-[#111]">
      <DesktopEdge />
      <div className="flex min-w-0 flex-1 flex-col border-t-2 border-[#1d1820] bg-[#efefef]">
        <header className="shrink-0 bg-white text-[#8a8a8a]">
          <div className="flex h-[21px] items-center pl-[5px]">
            <FreeCadLogo size="size-[12px]" />
            <h1 className="ml-[4px] flex-1">FreeCAD 0.20.1</h1>
            <button type="button" aria-label="Minimize" className="flex w-[33px] justify-center">
              <svg viewBox="0 0 8 8" className="size-[8px]" aria-hidden="true"><path d="M0 4.500h8" stroke="#999" /></svg>
            </button>
            <button type="button" aria-label="Maximize" className="flex w-[33px] justify-center">
              <svg viewBox="0 0 8 8" fill="none" className="size-[8px]" aria-hidden="true"><path d="M0.500 0.500h7v7h-7z" stroke="#999" /></svg>
            </button>
            <button type="button" aria-label="Close window" className="flex w-[34px] justify-center">
              <svg viewBox="0 0 8 8" className="size-[8px]" aria-hidden="true"><path d="M0.500 0.500l7 7M7.500 0.500l-7 7" stroke="#999" /></svg>
            </button>
          </div>
          <nav className="flex h-[15px] items-center gap-[11px] pl-[5px]">
            {MENUS.map((menu) => (
              <button type="button" key={menu}>{menu}</button>
            ))}
          </nav>
        </header>
        <FileRow />
        <ViewRow />
        <PagesRow />
        <AnnotationRow />
        <div className="flex min-h-0 flex-1 gap-[3px]">
          <ComboView />
          <PageArea />
        </div>
        <footer className="flex h-[22px] shrink-0 items-center text-[8px]">
          <p className="flex-1">Valid, Internal name: Part004</p>
          <button type="button" className="flex h-[18px] w-[64px] items-center justify-center gap-[3px] border-l border-[#d6d6d6] pl-[6px]">
            <svg viewBox="0 0 8 11" fill="none" className="h-[11px] w-[8px]" aria-hidden="true">
              <rect x="1" y="0.500" width="6" height="10" rx="3" stroke="#333" />
              <path d="M4 2.500v3" stroke="#333" />
            </svg>
            Blender
            <svg viewBox="0 0 6 4" className="h-[4px] w-[6px]" aria-hidden="true"><path d="M0 0h6L3 4z" fill="#222" /></svg>
          </button>
          <span className="flex h-[18px] w-[93px] items-center border-x border-[#d6d6d6] pl-[3px]">2.17 ' x 1.63 '</span>
          <svg viewBox="0 0 12 12" className="h-[12px] w-[12px] self-end" aria-hidden="true">
            <path d="M8 2h2v2H8zM5 5h2v2H5zM8 5h2v2H8zM2 8h2v2H2zM5 8h2v2H5zM8 8h2v2H8z" fill="#bdbdbd" />
          </svg>
        </footer>
      </div>
    </div>
  );
}

export default App;
